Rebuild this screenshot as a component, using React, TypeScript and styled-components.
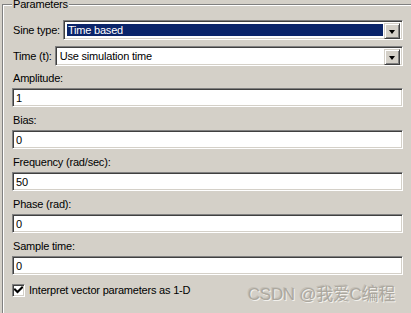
import React from "react";
import styled, { createGlobalStyle } from "styled-components";

const GlobalStyle = createGlobalStyle`
  html, body {
    margin: 0;
    padding: 0;
    background: #d4d0c8;
  }
  body {
    font-family: "Liberation Sans", Arial, sans-serif;
    font-size: 11px;
    letter-spacing: -0.2px;
    color: #000;
    overflow: hidden;
  }
`;

const fields = [
  { label: "Amplitude:", value: "1" },
  { label: "Bias:", value: "0" },
  { label: "Frequency (rad/sec):", value: "50" },
  { label: "Phase (rad):", value: "0" },
  { label: "Sample time:", value: "0" },
];

const App: React.FC = () => {
  return (
    <Page>
      <GlobalStyle />
      <Group>
        <Legend>Parameters</Legend>
        <Rows>
          <ComboRow>
            <Label>Sine type:</Label>
            <Combo>
              <ComboValue $selected>
                <span>Time based</span>
              </ComboValue>
              <DropButton>
                <Arrow />
              </DropButton>
            </Combo>
          </ComboRow>
          <ComboRow>
            <Label>Time (t):</Label>
            <Combo>
              <ComboValue>
                <span>Use simulation time</span>
              </ComboValue>
              <DropButton>
                <Arrow />
              </DropButton>
            </Combo>
          </ComboRow>
          <Fields>
            {fields.map((f) => (
              <Field key={f.label}>
                <Label>{f.label}</Label>
                <TextBox defaultValue={f.value} readOnly />
              </Field>
            ))}
          </Fields>
          <CheckRow>
            <CheckBox>
              <svg width="9" height="9" viewBox="0 0 9 9">
                <path
                  d="M1 3.5 L3.5 6 L8 1.5"
                  fill="none"
                  stroke="#000"
                  strokeWidth="2"
                  strokeLinecap="square"
                />
              </svg>
            </CheckBox>
            <Label>Interpret vector parameters as 1-D</Label>
          </CheckRow>
        </Rows>
      </Group>
      <Watermark>CSDN @我爱C编程</Watermark>
    </Page>
  );
};

export default App;

const Page = styled.div`
  position: relative;
  width: 411px;
  height: 313px;
  overflow: hidden;
  padding-top: 1px;
  box-sizing: border-box;
`;

const Group = styled.fieldset`
  margin: -3px 0 0 2px;
  padding: 0 8px 20px 9px;
  border: none;
  border-top: 1px solid #808080;
  border-left: 1px solid #808080;
  box-shadow: inset 1px 1px 0 #fff;
  min-width: 0;
`;

const Legend = styled.legend`
  margin-left: 0;
  padding: 0 1px;
  background: #d4d0c8;
  line-height: 13px;
  font-size: 11px;
`;

const Rows = styled.div`
  display: flex;
  flex-direction: column;
  padding-top: 9px;
`;

const ComboRow = styled.div`
  display: flex;
  align-items: center;
  gap: 3px;
  margin-bottom: 6px;
  padding-left: 1px;
`;

const Label = styled.span`
  line-height: 14px;
  white-space: nowrap;
`;

const sunken = `
  box-sizing: border-box;
  border: 1px solid;
  border-color: #808080 #fff #fff #808080;
  box-shadow: inset 1px 1px 0 #404040, inset -1px -1px 0 #d4d0c8;
  background: #fff;
`;

const Combo = styled.div`
  ${sunken};
  flex: 1;
  height: 20px;
  display: flex;
  padding: 2px;
`;

const ComboValue = styled.div<{ $selected?: boolean }>`
  flex: 1;
  display: flex;
  padding: ${(p) => (p.$selected ? "1px" : "0 0 0 1px")};
  > span {
    flex: 1;
    display: flex;
    align-items: center;
    padding-left: 1px;
    background: ${(p) => (p.$selected ? "#0a246a" : "transparent")};
    color: ${(p) => (p.$selected ? "#fff" : "#000")};
  }
`;

const DropButton = styled.div`
  width: 16px;
  height: 16px;
  box-sizing: border-box;
  background: #d4d0c8;
  border: 1px solid;
  border-color: #d4d0c8 #404040 #404040 #d4d0c8;
  box-shadow: inset 1px 1px 0 #fff, inset -1px -1px 0 #808080;
  display: flex;
  align-items: center;
  justify-content: center;
`;

const Arrow = styled.div`
  width: 0;
  height: 0;
  border-left: 3.5px solid transparent;
  border-right: 3.5px solid transparent;
  border-top: 4px solid #000;
  margin-top: 1px;
`;

const Fields = styled.div`
  display: flex;
  flex-direction: column;
  gap: 6px;
  margin-top: -1px;
`;

const Field = styled.div`
  display: flex;
  flex-direction: column;
  gap: 3px;
  > span {
    padding-left: 1px;
  }
`;

const TextBox = styled.input`
  ${sunken};
  height: 19px;
  width: 100%;
  margin: 0;
  padding: 0 3px;
  font-family: "Liberation Sans", Arial, sans-serif;
  font-size: 11px;
  color: #000;
  outline: none;
`;

const CheckRow = styled.div`
  display: flex;
  align-items: center;
  gap: 4px;
  margin-top: 8px;
`;

const CheckBox = styled.div`
  ${sunken};
  width: 13px;
  height: 13px;
  display: flex;
  align-items: center;
  justify-content: center;
`;

const Watermark = styled.div`
  position: absolute;
  right: 16px;
  bottom: 9px;
  font-family: "Liberation Sans", "Noto Sans CJK SC", sans-serif;
  font-size: 17px;
  letter-spacing: -0.3px;
  line-height: 18px;
  color: #aca89f;
  text-shadow: 1px 1px 0 #f2f0ec, -1px -1px 0 #c4c0b8;
  white-space: nowrap;
`;
